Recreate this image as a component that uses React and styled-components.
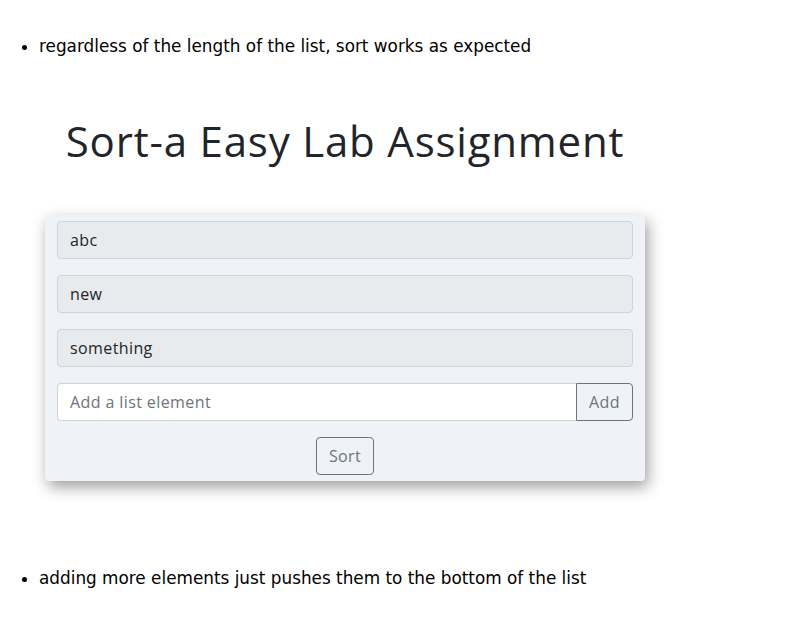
import React from "react";
import styled, { createGlobalStyle } from "styled-components";

const GlobalStyle = createGlobalStyle`
  body {
    margin: 0;
    background: #ffffff;
  }
`;

const Page = styled.div`
  width: 809px;
  padding-top: 34px;
`;

const Notes = styled.ul`
  margin: 0;
  padding-left: 39px;
  font-family: "DejaVu Sans", sans-serif;
  font-size: 16.85px;
  line-height: 24px;
  color: #000;
`;

const Section = styled.div`
  width: 600px;
  margin-left: 45px;
  padding-top: 53px;
  padding-bottom: 85px;
`;

const Title = styled.h1`
  margin: 0 0 44px;
  text-align: center;
  font-family: "Open Sans", sans-serif;
  font-weight: 400;
  font-size: 42px;
  letter-spacing: 0.8px;
  line-height: 60px;
  color: #212529;
`;

const Card = styled.div`
  display: flex;
  flex-direction: column;
  gap: 16px;
  padding: 6px 12px;
  background: #eff3f7;
  border-radius: 4px;
  box-shadow: 3px 6px 15px rgba(0, 0, 0, 0.38);
  font-family: "Open Sans", sans-serif;
  font-size: 16px;
  letter-spacing: 0.4px;
`;

const Item = styled.div`
  height: 38px;
  box-sizing: border-box;
  display: flex;
  align-items: center;
  padding: 0 12px;
  background: #e8ebee;
  border: 1px solid #ced4da;
  border-radius: 4px;
  color: #212529;
`;

const InputRow = styled.div`
  display: flex;
  height: 38px;
`;

const Field = styled.input`
  flex: 1;
  box-sizing: border-box;
  height: 38px;
  padding: 0 12px;
  border: 1px solid #ced4da;
  border-right: none;
  border-radius: 4px 0 0 4px;
  background: #fff;
  font: inherit;
  letter-spacing: inherit;
  color: #212529;
  &::placeholder {
    color: #6c757d;
  }
`;

const Button = styled.button`
  box-sizing: border-box;
  height: 38px;
  padding: 0 12px;
  background: transparent;
  border: 1px solid #6c757d;
  border-radius: ${(p) => (p.$attached ? "0 4px 4px 0" : "4px")};
  font: inherit;
  letter-spacing: inherit;
  color: #6c757d;
`;

const Center = styled.div`
  display: flex;
  justify-content: center;
`;

export default function App() {
  const items = ["abc", "new", "something"];
  return (
    <Page>
      <GlobalStyle />
      <Notes>
        <li>regardless of the length of the list, sort works as expected</li>
      </Notes>
      <Section>
        <Title>Sort-a Easy Lab Assignment</Title>
        <Card>
          {items.map((it) => (
            <Item key={it}>{it}</Item>
          ))}
          <InputRow>
            <Field placeholder="Add a list element" />
            <Button $attached>Add</Button>
          </InputRow>
          <Center>
            <Button>Sort</Button>
          </Center>
        </Card>
      </Section>
      <Notes>
        <li>adding more elements just pushes them to the bottom of the list</li>
      </Notes>
    </Page>
  );
}
